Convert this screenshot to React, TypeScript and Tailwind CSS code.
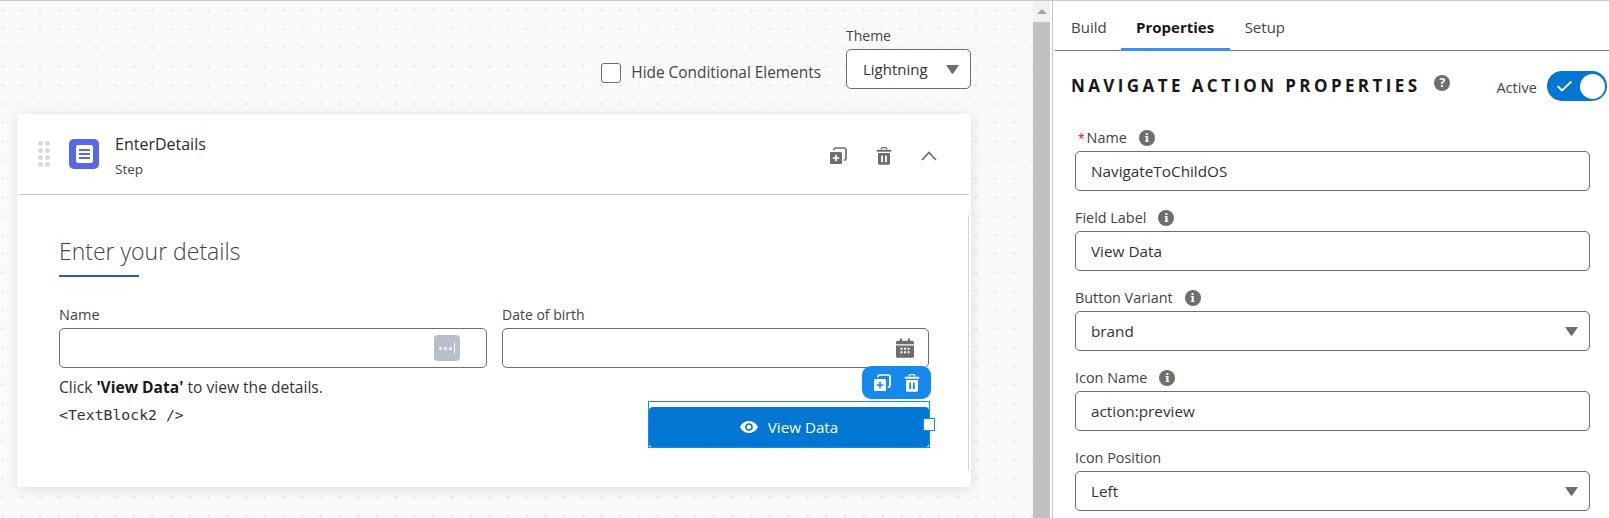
const ICON_GREY = '#706e6b';

function DotGrid() {
  return (
    <svg className="absolute inset-0 h-full w-full" aria-hidden="true">
      <defs>
        <pattern id="canvas-plus" x="0" y="0" width="18.72" height="18.72" patternUnits="userSpaceOnUse">
          <path d="M2.7 7.3v4M.7 9.3h4" stroke="#e8e8e8" strokeWidth="1" />
        </pattern>
      </defs>
      <rect width="100%" height="100%" fill="url(#canvas-plus)" />
    </svg>
  );
}

function CopyIcon({ color = ICON_GREY, plus = '#fff', className = '' }) {
  return (
    <svg viewBox="0 0 18 18" className={className} aria-hidden="true">
      <path d="M5 2.6C5 1.7 5.7 1 6.6 1h8.3c1.2 0 2.1.9 2.1 2.1v8.2c0 1-.7 1.7-1.6 1.7" fill="none" stroke={color} strokeWidth="1.7" strokeLinecap="round" />
      <rect x="1" y="5" width="12" height="12" rx="1.2" fill={color} />
      <path d="M7 7.7v6.6M3.7 11h6.6" stroke={plus} strokeWidth="1.7" />
    </svg>
  );
}

function TrashIcon({ color = ICON_GREY, slots = '#fff', className = '' }) {
  return (
    <svg viewBox="0 0 16 18" className={className} aria-hidden="true">
      <path d="M5.2 2.6V1.6C5.2 1 5.7.6 6.2.6h3.6c.5 0 1 .4 1 1v1" fill="none" stroke={color} strokeWidth="1.2" />
      <rect x="0.6" y="2.8" width="14.8" height="2" rx=".8" fill={color} />
      <path d="M2 6h12v10.6c0 .7-.6 1.2-1.2 1.2H3.2c-.6 0-1.2-.5-1.2-1.2z" fill={color} />
      <rect x="5.2" y="8.6" width="1.8" height="6.6" fill={slots} />
      <rect x="9" y="8.6" width="1.8" height="6.6" fill={slots} />
    </svg>
  );
}

function InfoDot({ className = '' }) {
  return (
    <span className={`flex h-4 w-4 items-center justify-center rounded-full bg-[#706e6b] text-[11px] leading-none font-bold text-white font-['DejaVu_Serif',serif] ${className}`}>
      i
    </span>
  );
}

function Caret({ className = '' }) {
  return (
    <svg viewBox="0 0 13 9" className={`h-[9px] w-[13px] ${className}`} aria-hidden="true">
      <path d="M0 0h13L7.2 8.4a.9.9 0 0 1-1.4 0z" fill={ICON_GREY} />
    </svg>
  );
}

function Tab({ label, active = false }: { label: string; active?: boolean }) {
  return (
    <div className={`flex h-[50px] items-center justify-center border-b-[3px] pt-[7px] text-[15px] ${active ? 'w-[109px] border-[#3d90f0] font-bold text-[#181818]' : 'border-transparent text-[#444444]'}`}>
      {label}
    </div>
  );
}

function PropField({ label, value, info, required, select }: { label: string; value: string; info?: boolean; required?: boolean; select?: boolean }) {
  return (
    <div className="h-[80px]">
      <div className="flex h-[40px] items-center pt-[14px] text-[14.4px] text-[#444444]">
        {required && <span className="mt-[2px] mr-[2px] ml-[3px] text-[12px] text-[#ea001e]">*</span>}
        {label}
        {info && <InfoDot className="ml-[12px]" />}
      </div>
      <div className="flex h-[40px] items-center justify-between rounded-[5px] border border-[#706e6b] bg-white pr-[11px] pl-[15px] text-[15.3px] text-[#333333]">
        {value}
        {select && <Caret />}
      </div>
    </div>
  );
}

export default function App() {
  return (
    <div className="flex h-[518px] w-[1609px] overflow-hidden border-t border-[#c9c9c9] bg-white font-['Open_Sans',sans-serif]">
      {/* canvas */}
      <div className="relative h-full w-[1033px] bg-[#fafafa]">
        <DotGrid />
        <div className="relative pl-[17px]">
          <div className="flex h-[113px] w-[954px] items-start justify-end">
            <label className="mt-[60px] flex items-center text-[15.4px] text-[#444444]">
              <span className="mr-[10px] h-[20px] w-[20px] rounded-[3px] border border-[#706e6b] bg-white" />
              Hide Conditional Elements
            </label>
            <div className="mt-[24px] ml-[25px] w-[125px]">
              <div className="h-[24px] text-[14px] text-[#444444]">Theme</div>
              <div className="flex h-[40px] items-center justify-between rounded-[5px] border border-[#706e6b] bg-white pr-[11px] pl-[16px] text-[15px] text-[#333333]">
                Lightning
                <Caret />
              </div>
            </div>
          </div>

          <div className="relative h-[373px] w-[954px] bg-white shadow-[0_2px_12px_rgba(0,0,0,0.12)]">
            <div className="mx-[2px] flex h-[81px] items-center border-b border-[#c9c9c9] pr-[32px]">
              <div className="ml-[19px] grid grid-cols-2 gap-[2px]">
                {Array.from({ length: 8 }).map((_, i) => (
                  <span key={i} className="h-[5px] w-[5px] rounded-full bg-[#d9d9d9]" />
                ))}
              </div>
              <div className="ml-[19px] flex h-[30px] w-[30px] items-center justify-center rounded-[5px] bg-[#5867e8]">
                <div className="flex h-[18px] w-[17px] flex-col justify-center gap-[2px] rounded-[2px] bg-white px-[3px]">
                  <span className="h-[2px] bg-[#5867e8]" />
                  <span className="h-[2px] bg-[#5867e8]" />
                  <span className="h-[2px] bg-[#5867e8]" />
                </div>
              </div>
              <div className="ml-[16px] flex-1 pt-[3px]">
                <div className="text-[16px] leading-[22px] text-[#2b2b2b]">EnterDetails</div>
                <div className="mt-[4px] text-[13.5px] leading-[20px] text-[#444444]">Step</div>
              </div>
              <div className="mt-[3px] flex items-center">
                <CopyIcon className="h-[18px] w-[18px]" />
                <TrashIcon className="ml-[29px] h-[18px] w-[16px]" />
                <svg viewBox="0 0 16 10" className="ml-[29px] h-[10px] w-[16px]" aria-hidden="true">
                  <path d="M1 9l7-7.5L15 9" fill="none" stroke={ICON_GREY} strokeWidth="1.8" />
                </svg>
              </div>
            </div>

            <div className="absolute top-[101px] right-[2px] h-[255px] w-px bg-[#d4d4d4]" />

            <div className="px-[42px] pt-[38px]">
              <div className="text-[23px] leading-[36px] font-light text-[#444444]">Enter your details</div>
              <div className="mt-[6px] h-[2px] w-[80px] bg-[#2a5caa]" />

              <div className="mt-[28px] grid grid-cols-[428px_427px] gap-x-[15px]">
                <div>
                  <div className="h-[23px] text-[14.5px] leading-[20px] text-[#444444]">Name</div>
                  <div className="flex h-[40px] items-center justify-end rounded-[5px] border border-[#706e6b] bg-white pr-[26px]">
                    <div className="flex h-[26px] w-[26px] items-center justify-center gap-[2px] rounded-[4px] bg-[#b8bfcc]">
                      <span className="h-[3px] w-[3px] rounded-full bg-white" />
                      <span className="h-[3px] w-[3px] rounded-full bg-white" />
                      <span className="h-[3px] w-[3px] rounded-full bg-white" />
                      <span className="h-[12px] w-px bg-white" />
                    </div>
                  </div>
                  <div className="mt-[9px] text-[15.6px] leading-[20px] text-[#333333]">
                    Click <b className="text-[#181818]">'View Data'</b> to view the details.
                  </div>
                  <div className="mt-[8px] font-['DejaVu_Sans_Mono',monospace] text-[14.8px] leading-[20px] text-[#333333]">{'<TextBlock2 />'}</div>
                </div>

                <div className="relative">
                  <div className="h-[23px] text-[14px] leading-[20px] text-[#444444]">Date of birth</div>
                  <div className="flex h-[40px] items-center justify-end rounded-[5px] border border-[#706e6b] bg-white pr-[14px]">
                    <svg viewBox="0 0 18 20" className="h-[20px] w-[18px]" aria-hidden="true">
                      <path d="M4 0.5h2v2.2H12V.5h2v2.2h2.4c.9 0 1.6.7 1.6 1.6v2H0v-2c0-.9.7-1.6 1.6-1.6H4z" fill={ICON_GREY} />
                      <path d="M0 7.4h18v10.8c0 .9-.7 1.6-1.6 1.6H1.6C.7 19.8 0 19.100 0 18.200z" fill={ICON_GREY} />
                      <path d="M4.500 9.700h2v2h-2zM8 9.700h2v2H8zM11.500 9.700h2v2h-2zM4.500 13.200h2v2h-2zM8 13.200h2v2H8zM11.500 13.200h2v2h-2z" fill="#fff" />
                    </svg>
                  </div>

                  <div className="absolute top-[61px] right-[-2px] flex h-[33px] w-[69px] items-center justify-center gap-[13px] rounded-[9px] bg-[#1589ee] pr-[1px]">
                    <CopyIcon color="#fff" plus="#1589ee" className="h-[18px] w-[18px]" />
                    <TrashIcon color="#fff" slots="#1589ee" className="h-[18px] w-[16px]" />
                  </div>

                  <div className="absolute top-[96px] right-[-1px] h-[47px] w-[282px] border border-[#1589ee] bg-white pt-[5px]">
                    <div className="flex h-[40px] items-center justify-center rounded-[4px] bg-[#0176d3] text-[15.2px] font-medium text-white">
                      <svg viewBox="0 0 18 12" className="mr-[10px] h-[12px] w-[18px]" aria-hidden="true">
                        <path fillRule="evenodd" d="M9 0c4 0 7.300 2.500 9 6-1.700 3.500-5 6-9 6S1.700 9.500 0 6c1.700-3.500 5-6 9-6zm0 2.200a3.800 3.800 0 1 0 0 7.600 3.800 3.800 0 0 0 0-7.600zm0 1.600a2.200 2.200 0 1 1 0 4.400 2.200 2.200 0 0 1 0-4.400z" fill="#fff" />
                      </svg>
                      View Data
                    </div>
                    <span className="absolute top-[16px] right-[-6px] h-[13px] w-[12px] border border-[#1589ee] bg-white" />
                  </div>
                </div>
              </div>
            </div>
          </div>
        </div>
      </div>

      {/* scrollbar */}
      <div className="relative w-[17px] bg-[#f1f1f1]">
        <div className="flex h-[21px] items-center justify-center">
          <span className="h-0 w-0 border-x-[5px] border-b-[5px] border-x-transparent border-b-[#a3a3a3]" />
        </div>
        <div className="h-full bg-[#c1c1c1]" />
      </div>

      {/* properties panel */}
      <div className="ml-[2px] w-[557px] border-l border-[#c9c9c9] pl-[2px]">
        <div className="flex h-[50px] items-center border-b border-[#747474] pl-[16px]">
          <Tab label="Build" />
          <div className="ml-[14px]">
            <Tab label="Properties" active />
          </div>
          <div className="ml-[15px]">
            <Tab label="Setup" />
          </div>
        </div>

        <div className="flex h-[80px] items-start pl-[16px]">
          <h2 className="mt-[23px] text-[17px] leading-[24px] font-bold tracking-[3.4px] text-[#181818] uppercase">Navigate Action Properties</h2>
          <span className="mt-[24px] ml-[14px] flex h-4 w-4 items-center justify-center rounded-full bg-[#706e6b] text-[12px] leading-none font-bold text-white">?</span>
          <span className="mt-[27px] ml-[46px] text-[14.5px] leading-[20px] text-[#444444]">Active</span>
          <div className="mt-[20px] ml-[10px] flex h-[30px] w-[60px] items-center justify-between rounded-full bg-[#0176d3] pr-[2px] pl-[9px]">
            <svg viewBox="0 0 17 12" className="h-[12px] w-[17px]" aria-hidden="true">
              <path d="M1.500 6l4.500 4.500L15.500 1.500" fill="none" stroke="#fff" strokeWidth="1.800" />
            </svg>
            <span className="h-[25px] w-[25px] rounded-full bg-white" />
          </div>
        </div>

        <div className="mt-[-20px] ml-[20px] w-[515px]">
          <PropField label="Name" value="NavigateToChildOS" info required />
          <PropField label="Field Label" value="View Data" info />
          <PropField label="Button Variant" value="brand" info select />
          <PropField label="Icon Name" value="action:preview" info />
          <PropField label="Icon Position" value="Left" select />
        </div>
      </div>
    </div>
  );
}
